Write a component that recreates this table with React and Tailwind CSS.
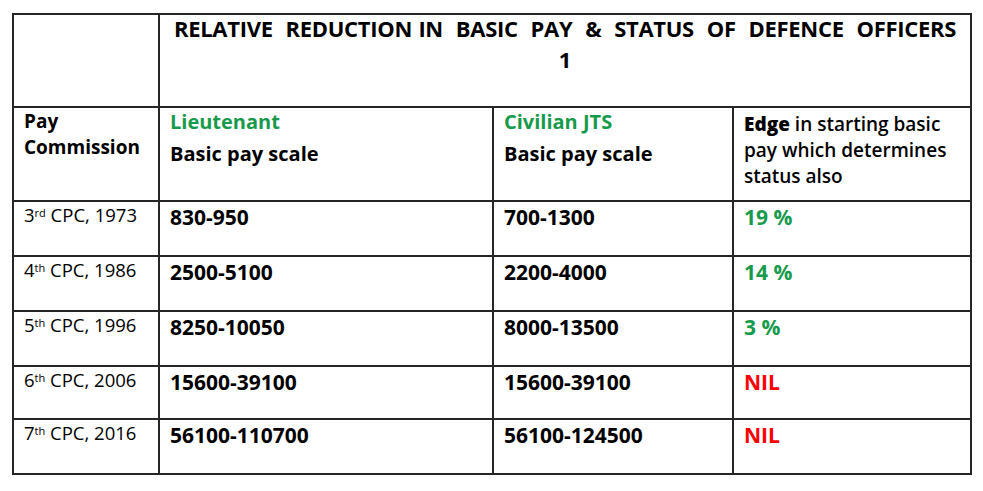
const rows = [
  { n: "3", sup: "rd", year: "1973", lt: "830-950", civ: "700-1300", edge: "19 %", good: true },
  { n: "4", sup: "th", year: "1986", lt: "2500-5100", civ: "2200-4000", edge: "14 %", good: true },
  { n: "5", sup: "th", year: "1996", lt: "8250-10050", civ: "8000-13500", edge: "3 %", good: true },
  { n: "6", sup: "th", year: "2006", lt: "15600-39100", civ: "15600-39100", edge: "NIL", good: false, h: "h-[53px]" },
  { n: "7", sup: "th", year: "2016", lt: "56100-110700", civ: "56100-124500", edge: "NIL", good: false },
];

const cell = "border-2 border-[#262626] pl-[10px]";

export default function App() {
  return (
    <div className="w-[983px] h-[491px] bg-white pl-[12px] pt-[13px] text-black font-['Open_Sans','Liberation_Sans',sans-serif]">
      <table className="border-collapse border-2 border-[#262626] table-fixed w-[958px]">
        <colgroup>
          <col className="w-[146px]" />
          <col className="w-[334px]" />
          <col className="w-[240px]" />
          <col className="w-[238px]" />
        </colgroup>
        <tbody>
          <tr className="h-[93px] align-top">
            <td className="border-2 border-[#262626]"></td>
            <td colSpan={3} className="border-2 border-[#262626] text-center font-bold text-[22px] leading-[31px] tracking-[-0.3px]">
              <div className="-mt-[2px] whitespace-pre [word-spacing:1px]">
                {"RELATIVE  REDUCTION IN  BASIC  PAY  &  STATUS  OF  DEFENCE  OFFICERS"}
              </div>
              <div>1</div>
            </td>
          </tr>
          <tr className="h-[94px] align-top font-bold">
            <td className={`${cell} text-[19px] leading-[26px]`}>
              Pay
              <br />
              Commission
            </td>
            <td className={cell}>
              <div className="text-[#179a4b] text-[20px] leading-[28px]">Lieutenant</div>
              <div className="text-[20px] leading-[36px]">Basic pay scale</div>
            </td>
            <td className={cell}>
              <div className="text-[#179a4b] text-[20px] leading-[28px]">Civilian JTS</div>
              <div className="text-[20px] leading-[36px]">Basic pay scale</div>
            </td>
            <td className={`${cell} pt-[3px] text-[19px] leading-[26px]`}>
              <span className="font-extrabold">Edge</span>
              <span className="font-semibold"> in starting basic pay which determines status also</span>
            </td>
          </tr>
          {rows.map((r) => (
            <tr key={r.n} className={`${r.h || "h-[55px]"} align-top`}>
              <td className={`${cell} pt-[1px] text-[18.5px] leading-[24px] whitespace-nowrap`}>
                {r.n}
                <sup className="text-[11px]">{r.sup}</sup> CPC, {r.year}
              </td>
              <td className={`${cell} pt-[2px] text-[21px] leading-[26px] font-bold`}>{r.lt}</td>
              <td className={`${cell} pt-[2px] text-[21px] leading-[26px] font-bold`}>{r.civ}</td>
              <td
                className={`${cell} pt-[2px] text-[21px] leading-[26px] font-bold ${
                  r.good ? "text-[#179a4b]" : "text-[#ff0000]"
                }`}
              >
                {r.edge}
              </td>
            </tr>
          ))}
        </tbody>
      </table>
    </div>
  );
}
